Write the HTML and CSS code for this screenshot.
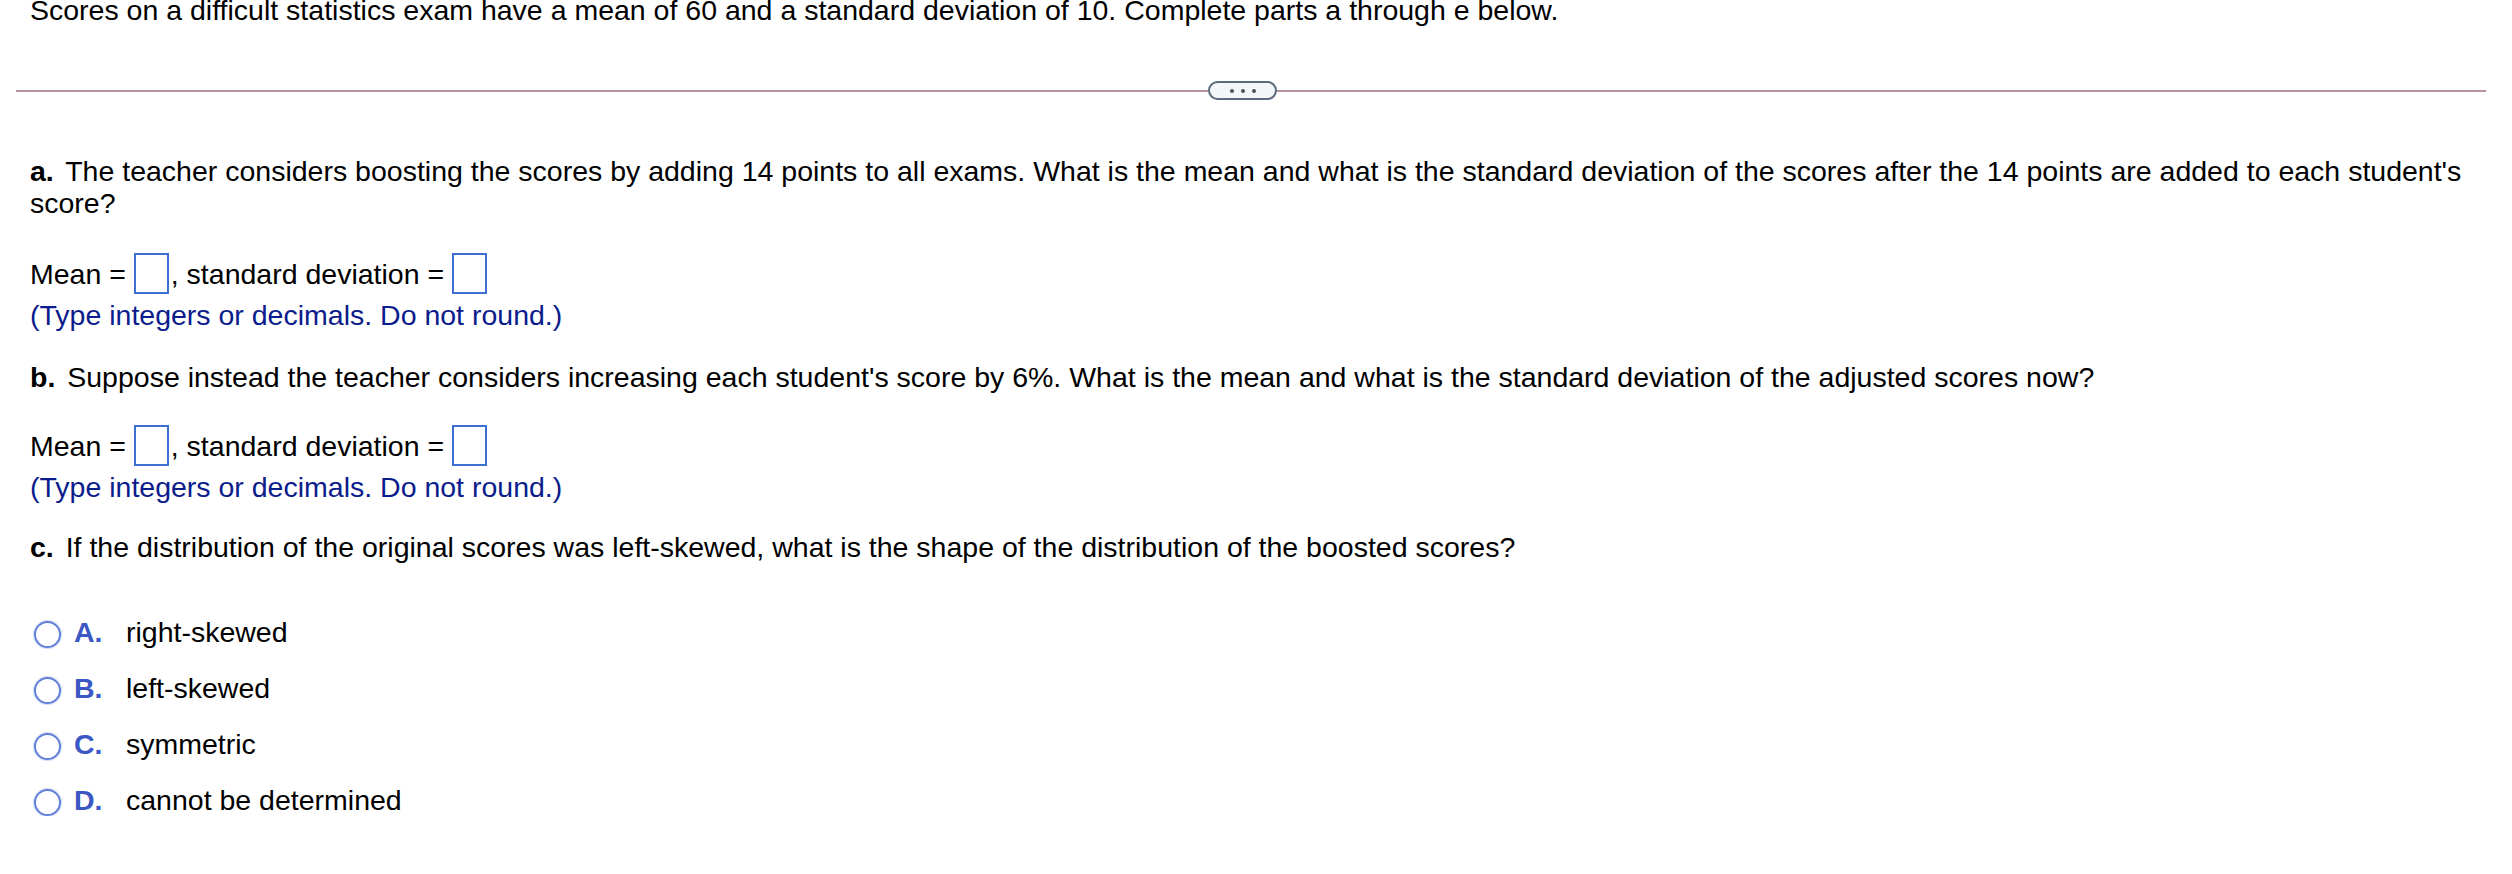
FILE: index.html
```html
<!DOCTYPE html>
<html>
<head>
<meta charset="utf-8">
<link rel="stylesheet" href="styles.css">
</head>
<body>
<p class="stem">Scores on a difficult statistics exam have a mean of 60 and a standard deviation of 10. Complete parts a through e below.</p>

<div class="divider">
  <span class="rule rule-left"></span>
  <span class="more"><i class="dot"></i><i class="dot"></i><i class="dot"></i></span>
  <span class="rule rule-right"></span>
</div>

<p class="q q-a"><b class="lbl">a.</b> The teacher considers boosting the scores by adding 14 points to all exams. What is the mean and what is the standard deviation of the scores after the 14 points are added to each student's score?</p>
<p class="answer answer-a">Mean = <span class="box"></span>, standard deviation = <span class="box"></span></p>
<p class="hint">(Type integers or decimals. Do not round.)</p>

<p class="q q-b"><b class="lbl">b.</b> Suppose instead the teacher considers increasing each student's score by 6%. What is the mean and what is the standard deviation of the adjusted scores now?</p>
<p class="answer answer-b">Mean = <span class="box"></span>, standard deviation = <span class="box"></span></p>
<p class="hint">(Type integers or decimals. Do not round.)</p>

<p class="q q-c"><b class="lbl">c.</b> If the distribution of the original scores was left-skewed, what is the shape of the distribution of the boosted scores?</p>

<div class="options">
  <div class="opt"><span class="radio"></span><span class="letter">A.</span><span class="otext">right-skewed</span></div>
  <div class="opt"><span class="radio"></span><span class="letter">B.</span><span class="otext">left-skewed</span></div>
  <div class="opt"><span class="radio"></span><span class="letter">C.</span><span class="otext">symmetric</span></div>
  <div class="opt"><span class="radio"></span><span class="letter">D.</span><span class="otext">cannot be determined</span></div>
</div>
</body>
</html>
```

FILE: styles.css
```css
html, body {
  margin: 0;
  padding: 0;
  background: #ffffff;
}
body {
  padding: 0 22px 0 30px;
  font-family: "Liberation Sans", Arial, sans-serif;
  font-size: 28.5px;
  line-height: 32px;
  color: #000000;
  overflow: hidden;
}
p {
  margin: 0;
}
.stem {
  margin-top: -6px;
}
.divider {
  display: flex;
  align-items: center;
  margin-top: 55px;
  margin-left: -14px;
  width: 2470px;
  height: 19px;
}
.rule {
  height: 2px;
  background: #b8929f;
}
.rule-left {
  width: 1192px;
}
.rule-right {
  flex: 1;
}
.more {
  box-sizing: border-box;
  width: 69px;
  height: 19px;
  border: 2px solid #5c6b7c;
  border-radius: 10px;
  background: #f3f5f8;
  display: flex;
  align-items: center;
  justify-content: center;
  gap: 7px;
}
.dot {
  width: 4px;
  height: 4px;
  border-radius: 50%;
  background: #4b5058;
}
.lbl {
  font-weight: bold;
  margin-right: 4px;
}
.q-a {
  margin-top: 55px;
}
.answer {
  margin-top: 34px;
}
.box {
  display: inline-block;
  box-sizing: border-box;
  width: 35px;
  height: 41px;
  border: 2px solid #3d6fd2;
  vertical-align: -10px;
  margin-right: 2px;
}
.hint {
  margin-top: 5px;
  color: #0b1c8c;
}
.q-b {
  margin-top: 30px;
}
.answer-b {
  margin-top: 32px;
}
.q-c {
  margin-top: 28px;
}
.options {
  margin-top: 53px;
  display: flex;
  flex-direction: column;
  gap: 24px;
}
.opt {
  display: flex;
  align-items: center;
  height: 32px;
}
.radio {
  box-sizing: border-box;
  width: 27px;
  height: 27px;
  margin: 5px 0 0 4px;
  border: 2px solid #5f7fd8;
  border-radius: 50%;
  box-shadow: 0 0 1px 1px rgba(120, 148, 228, 0.35);
  flex: none;
}
.letter {
  width: 52px;
  margin-left: 13px;
  font-weight: bold;
  color: #3b57c4;
}
.otext {
  color: #000000;
}
```
